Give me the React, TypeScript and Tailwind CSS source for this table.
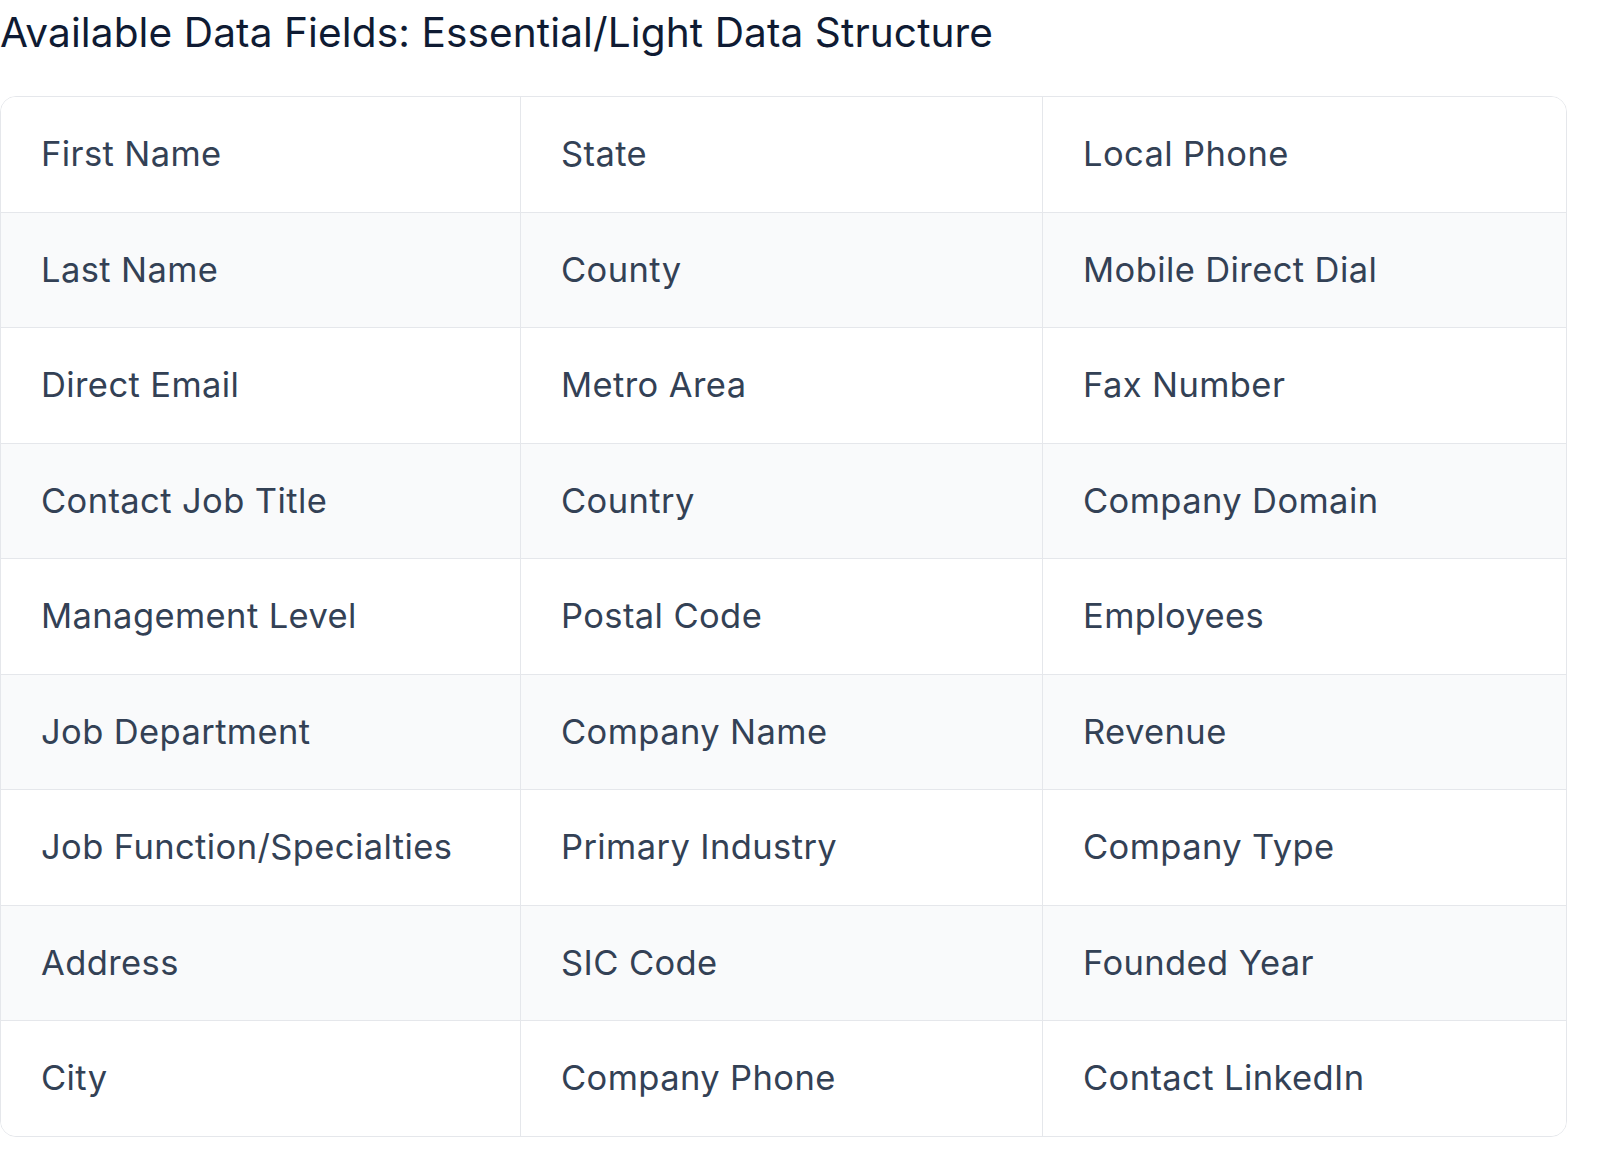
import React from "react";

const rows: [string, string, string][] = [
  ["First Name", "State", "Local Phone"],
  ["Last Name", "County", "Mobile Direct Dial"],
  ["Direct Email", "Metro Area", "Fax Number"],
  ["Contact Job Title", "Country", "Company Domain"],
  ["Management Level", "Postal Code", "Employees"],
  ["Job Department", "Company Name", "Revenue"],
  ["Job Function/Specialties", "Primary Industry", "Company Type"],
  ["Address", "SIC Code", "Founded Year"],
  ["City", "Company Phone", "Contact LinkedIn"],
];

export default function App() {
  return (
    <div className="bg-white w-[1600px] h-[1159px]" style={{ fontFamily: "Inter, 'Noto Sans', sans-serif" }}>
      <h1 className="text-[40.6px] leading-[56px] text-[#0f1b33] font-normal pt-[5px] tracking-[0.1px]">
        Available Data Fields: Essential/Light Data Structure
      </h1>
      <div className="mt-[35px] w-[1567px] border border-[#e5e7eb] rounded-[16px] overflow-hidden">
        {rows.map((r, i) => (
          <div
            key={i}
            className={`grid grid-cols-[520px_522px_1fr] ${i % 2 === 1 ? "bg-[#f9fafb]" : "bg-white"} ${i < rows.length - 1 ? "border-b border-[#e5e7eb]" : ""}`}
          >
            {r.map((c, j) => (
              <div
                key={j}
                className={`h-[114.5px] flex items-center pl-[40px] text-[34.5px] text-[#334155] tracking-[0.4px] ${j < 2 ? "border-r border-[#e5e7eb]" : ""}`}
              >
                {c}
              </div>
            ))}
          </div>
        ))}
      </div>
    </div>
  );
}
